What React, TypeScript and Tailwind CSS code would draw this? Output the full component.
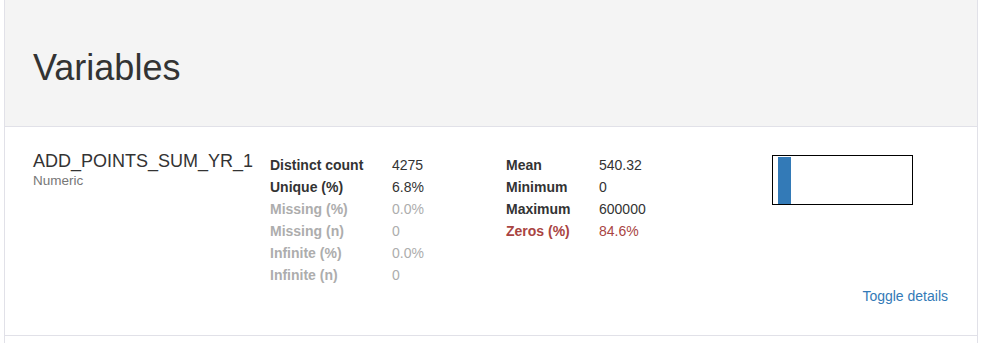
import React from "react";

const stats1: { label: string; value: string; muted?: boolean }[] = [
  { label: "Distinct count", value: "4275" },
  { label: "Unique (%)", value: "6.8%" },
  { label: "Missing (%)", value: "0.0%", muted: true },
  { label: "Missing (n)", value: "0", muted: true },
  { label: "Infinite (%)", value: "0.0%", muted: true },
  { label: "Infinite (n)", value: "0", muted: true },
];

const stats2: { label: string; value: string; alert?: boolean }[] = [
  { label: "Mean", value: "540.32" },
  { label: "Minimum", value: "0" },
  { label: "Maximum", value: "600000" },
  { label: "Zeros (%)", value: "84.6%", alert: true },
];

export default function App() {
  return (
    <div
      className="h-[343px] overflow-hidden bg-white text-[#333]"
      style={{ fontFamily: '"Liberation Sans", Arial, sans-serif' }}
    >
      <div className="ml-[4px] w-[974px] h-[360px] border-x border-[#e1e1e8]">
        <div className="h-[127px] bg-[#f4f4f4] border-b border-[#e1e1e8] pl-[28px] pt-[48px]">
          <h1 className="text-[36px] leading-[40px] font-normal text-[#333]">Variables</h1>
        </div>
        <div className="border-b border-[#e1e1e8] h-[209px] pl-[28px] pr-[29px] pt-[24px] flex flex-col">
          <div className="flex">
            <div className="w-[237px]">
              <div className="text-[18px] leading-[20px] text-[#333]">ADD_POINTS_SUM_YR_1</div>
              <div className="text-[13.5px] leading-[20px] text-[#777]">Numeric</div>
            </div>
            <div className="pt-[3px] w-[236px] text-[14px]">
              {stats1.map((s) => (
                <div key={s.label} className={"flex h-[22px] leading-[22px] " + (s.muted ? "text-[#adadad]" : "text-[#333]")}>
                  <div className="w-[122px] font-bold">{s.label}</div>
                  <div>{s.value}</div>
                </div>
              ))}
            </div>
            <div className="pt-[3px] w-[266px] text-[14px]">
              {stats2.map((s) => (
                <div key={s.label} className={"flex h-[22px] leading-[22px] " + (s.alert ? "text-[#a94442]" : "text-[#333]")}>
                  <div className="w-[93px] font-bold">{s.label}</div>
                  <div>{s.value}</div>
                </div>
              ))}
            </div>
            <div className="pt-[4px]">
              <div className="w-[141px] h-[50px] border border-black relative">
                <div className="absolute left-[5px] bottom-0 w-[13px] h-[47px] bg-[#337ab7]" />
              </div>
            </div>
          </div>
          <div className="flex justify-end">
            <a className="text-[14px] leading-[20px] text-[#337ab7]" href="#">Toggle details</a>
          </div>
        </div>
      </div>
    </div>
  );
}
